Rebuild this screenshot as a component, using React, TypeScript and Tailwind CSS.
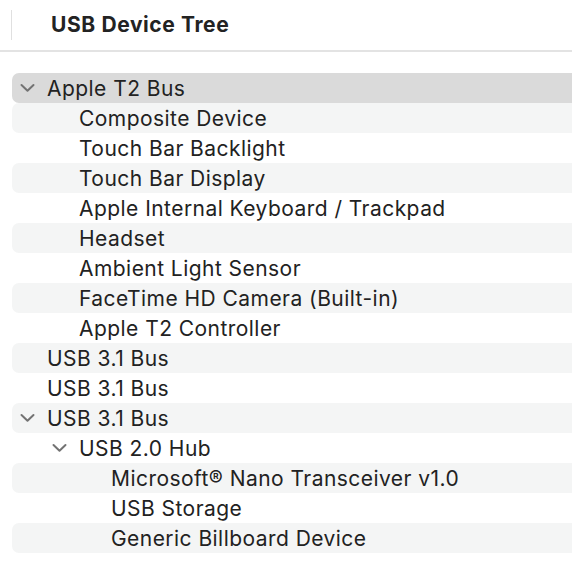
import React from "react";

type Row = { label: string; level: number; chevron?: boolean };

const rows: Row[] = [
  { label: "Apple T2 Bus", level: 0, chevron: true },
  { label: "Composite Device", level: 1 },
  { label: "Touch Bar Backlight", level: 1 },
  { label: "Touch Bar Display", level: 1 },
  { label: "Apple Internal Keyboard / Trackpad", level: 1 },
  { label: "Headset", level: 1 },
  { label: "Ambient Light Sensor", level: 1 },
  { label: "FaceTime HD Camera (Built-in)", level: 1 },
  { label: "Apple T2 Controller", level: 1 },
  { label: "USB 3.1 Bus", level: 0 },
  { label: "USB 3.1 Bus", level: 0 },
  { label: "USB 3.1 Bus", level: 0, chevron: true },
  { label: "USB 2.0 Hub", level: 1, chevron: true },
  { label: "Microsoft® Nano Transceiver v1.0", level: 2 },
  { label: "USB Storage", level: 2 },
  { label: "Generic Billboard Device", level: 2 },
];

const indent = ["pl-[35px]", "pl-[67px]", "pl-[99px]"];
const chevPos = ["left-[8px]", "left-[40px]", "left-[72px]"];

function Chevron({ cls }: { cls: string }) {
  return (
    <svg
      className={`absolute top-1/2 -translate-y-1/2 ${cls}`}
      width="15"
      height="9"
      viewBox="0 0 15 9"
      fill="none"
    >
      <path
        d="M1.5 1.5 L7.5 7.3 L13.5 1.5"
        stroke="#737373"
        strokeWidth="2"
        strokeLinecap="round"
        strokeLinejoin="round"
      />
    </svg>
  );
}

export default function App() {
  return (
    <div
      className="w-[572px] h-[582px] bg-white overflow-hidden text-[#222222]"
      style={{ fontFamily: "Inter, 'Liberation Sans', sans-serif" }}
    >
      <div className="h-[52px] border-b-2 border-[#e3e3e3] flex items-start pt-[10px]">
        <div className="ml-[11px] w-px h-[30px] bg-[#e0e0e0]" />
        <div className="ml-[39px] h-[30px] flex items-center text-[21px] font-bold tracking-[0.6px] text-[#232323]">
          USB Device Tree
        </div>
      </div>
      <div className="mt-[21px] flex flex-col">
        {rows.map((r, i) => {
          const bg =
            i === 0 ? "bg-[#dadada]" : i % 2 === 1 ? "bg-[#f4f5f5]" : "bg-white";
          return (
            <div
              key={i}
              className={`relative ml-[12px] h-[30px] rounded-l-[7px] flex items-center text-[21px] tracking-[0.45px] ${bg} ${indent[r.level]}`}
            >
              {r.chevron && <Chevron cls={chevPos[r.level]} />}
              <span className="leading-none">{r.label}</span>
            </div>
          );
        })}
      </div>
    </div>
  );
}
